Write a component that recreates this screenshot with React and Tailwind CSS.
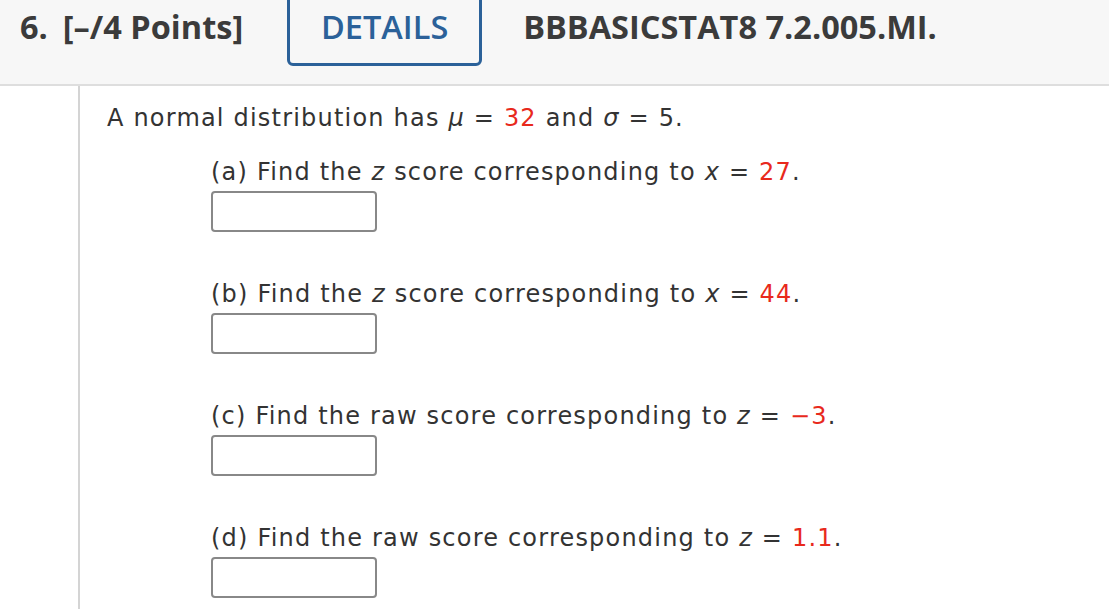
import React from 'react';

const parts = [
  { label: '(a)', text: 'Find the ', v: 'z', mid: ' score corresponding to ', w: 'x', val: '27' },
  { label: '(b)', text: 'Find the ', v: 'z', mid: ' score corresponding to ', w: 'x', val: '44' },
  { label: '(c)', text: 'Find the raw score corresponding to ', w: 'z', val: '\u22123' },
  { label: '(d)', text: 'Find the raw score corresponding to ', w: 'z', val: '1.1' },
];

function Part({ p }) {
  return (
    <div className="mt-[26px] pb-[22px]">
      <p className="h-[28px] leading-[28px]">
        {p.label} {p.text}
        {p.v && <i>{p.v}</i>}
        {p.mid}
        <i>{p.w}</i> = <span className="text-[#e8291c]">{p.val}</span>.
      </p>
      <input
        type="text"
        className="mt-[5px] block w-[166px] h-[41px] border-2 border-[#888] rounded-[4px] bg-white outline-none"
      />
    </div>
  );
}

export default function App() {
  return (
    <div className="w-[1109px] h-[609px] overflow-hidden bg-white text-[#333]">
      <div className="flex items-start h-[86px] bg-[#f7f7f7] border-b-2 border-[#dedede] text-[#3b3b3b] font-bold text-[32.5px] leading-[40px] font-['Open_Sans',sans-serif]">
        <span className="ml-[20px] mt-[7px]">6.</span>
        <span className="ml-[15px] mt-[7px]">[–/4 Points]</span>
        <div className="ml-[44px] -mt-[3px] w-[195px] h-[69px] border-[3px] border-[#2b6199] rounded-b-[6px] flex justify-center pt-[7px] text-[#2b6199] font-semibold">
          DETAILS
        </div>
        <span className="ml-[41px] mt-[7px]">BBBASICSTAT8 7.2.005.MI.</span>
      </div>
      <div className="flex h-[523px]">
        <div className="w-[80px] border-r-2 border-[#d4d4d4]" />
        <div className="pl-[27px] pt-[18px] text-[24px] tracking-[1.2px] font-['DejaVu_Sans',Verdana,sans-serif]">
          <p className="h-[28px] leading-[28px]">
            A normal distribution has <i>μ</i> = <span className="text-[#e8291c]">32</span> and <i>σ</i> = 5.
          </p>
          <div className="pl-[104px]">
            {parts.map((p) => (
              <Part key={p.label} p={p} />
            ))}
          </div>
        </div>
      </div>
    </div>
  );
}
